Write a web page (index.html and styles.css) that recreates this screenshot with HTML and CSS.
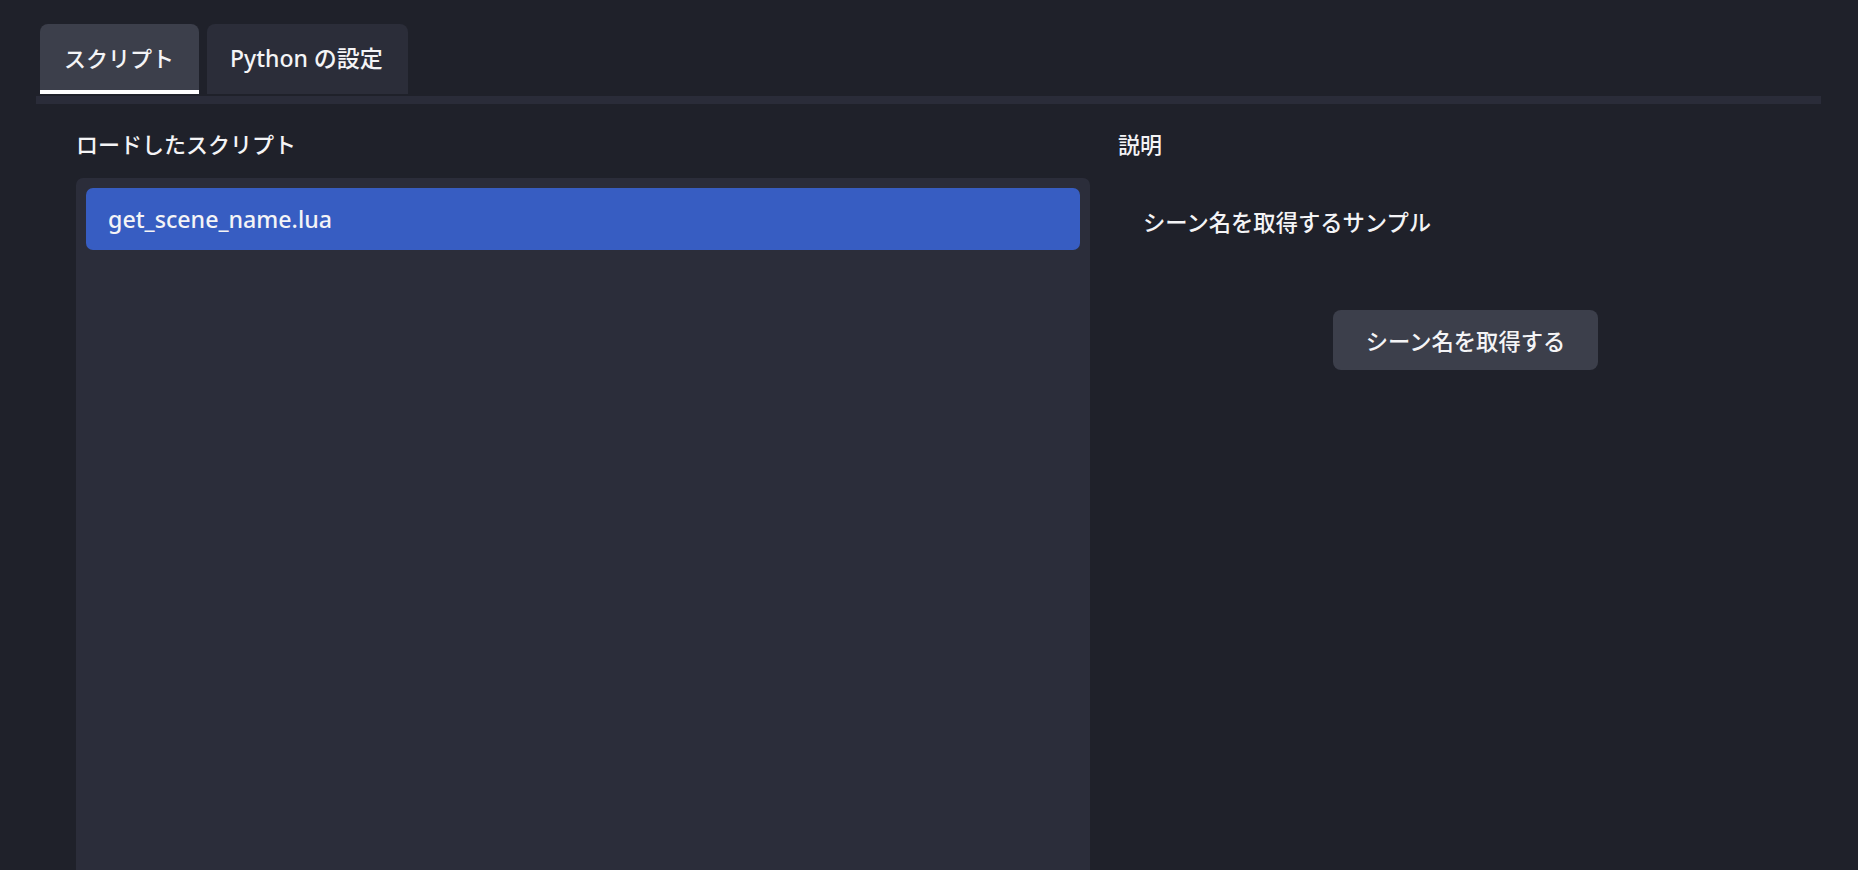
FILE: index.html
```html
<!DOCTYPE html>
<html lang="ja">
<head>
<meta charset="utf-8">
<title>Scripts</title>
<link rel="stylesheet" href="styles.css">
</head>
<body>
<div class="app">
  <div class="tabs">
    <div class="tab active">スクリプト</div>
    <div class="tab wide">Python の設定</div>
  </div>
  <div class="divider"></div>
  <div class="content">
    <div class="left-col">
      <div class="label">ロードしたスクリプト</div>
      <div class="panel">
        <div class="item selected">get_scene_name.lua</div>
      </div>
    </div>
    <div class="right-col">
      <div class="label">説明</div>
      <div class="desc">シーン名を取得するサンプル</div>
      <div class="actions">
        <button class="btn">シーン名を取得する</button>
      </div>
    </div>
  </div>
</div>
</body>
</html>
```
FILE: styles.css
```css
html, body {
  margin: 0;
  padding: 0;
  background: #1f212a;
  overflow: hidden;
}
body {
  font-family: "Noto Sans", "Noto Sans CJK JP", sans-serif;
  font-weight: 500;
  color: #f4f4f6;
}
.app {
  padding: 24px 37px 0 36px;
}
.tabs {
  display: flex;
  gap: 8px;
  padding-left: 4px;
}
.tab {
  height: 70px;
  box-sizing: border-box;
  padding: 0 25px 4px 24px;
  display: flex;
  align-items: center;
  font-size: 22px;
  background: #2b2d39;
  border-radius: 8px 8px 0 0;
}
.tab.active {
  background: #3c3f4b;
  border-bottom: 4px solid #ffffff;
  padding-bottom: 0;
}
.tab.wide {
  padding: 0 25px 4px 23px;
  font-size: 23px;
}
.divider {
  height: 8px;
  margin-top: 2px;
  background: #2a2c39;
}
.content {
  display: flex;
  gap: 28px;
  padding-left: 40px;
  padding-top: 25px;
}
.left-col {
  width: 1014px;
  flex: none;
}
.right-col {
  flex: 1;
}
.label {
  font-size: 22px;
  line-height: 30px;
  height: 30px;
}
.panel {
  margin-top: 19px;
  background: #2b2d3a;
  border-radius: 7px;
  padding: 10px;
  height: 720px;
}
.item {
  height: 62px;
  display: flex;
  align-items: center;
  padding: 0 22px;
  font-size: 23.2px;
  border-radius: 7px;
}
.item.selected {
  background: #375dc2;
}
.desc {
  margin-top: 49px;
  padding-left: 25px;
  font-size: 22.3px;
  line-height: 30px;
}
.actions {
  display: flex;
  justify-content: center;
  margin-top: 72px;
  padding-right: 8px;
}
.btn {
  font-family: inherit;
  font-weight: 500;
  color: #f4f4f6;
  font-size: 22.3px;
  background: #3c3f4b;
  border: none;
  border-radius: 8px;
  height: 60px;
  padding: 0 33px;
}
```
